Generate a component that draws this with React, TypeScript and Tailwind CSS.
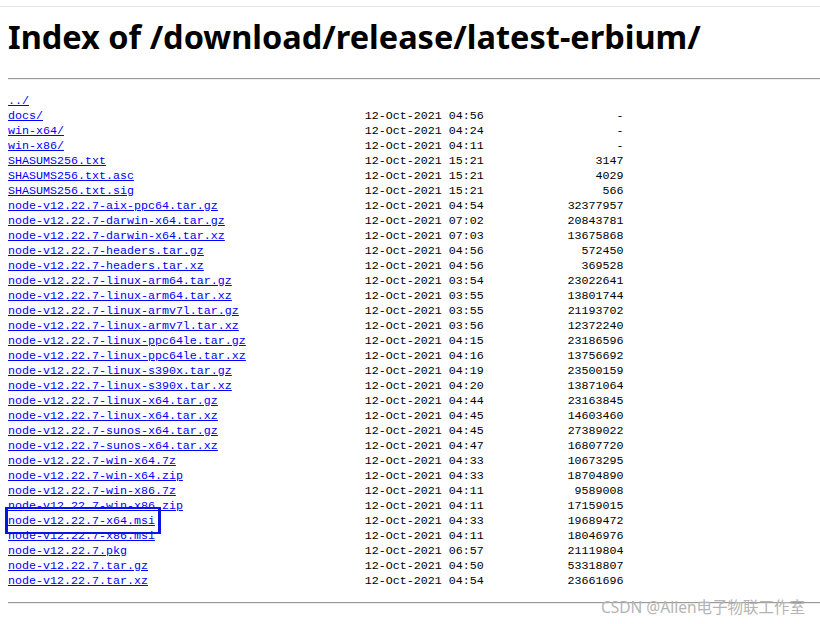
const ROWS: [string, string, string][] = [
  ['../', '', ''],
  ['docs/', '12-Oct-2021 04:56', '-'],
  ['win-x64/', '12-Oct-2021 04:24', '-'],
  ['win-x86/', '12-Oct-2021 04:11', '-'],
  ['SHASUMS256.txt', '12-Oct-2021 15:21', '3147'],
  ['SHASUMS256.txt.asc', '12-Oct-2021 15:21', '4029'],
  ['SHASUMS256.txt.sig', '12-Oct-2021 15:21', '566'],
  ['node-v12.22.7-aix-ppc64.tar.gz', '12-Oct-2021 04:54', '32377957'],
  ['node-v12.22.7-darwin-x64.tar.gz', '12-Oct-2021 07:02', '20843781'],
  ['node-v12.22.7-darwin-x64.tar.xz', '12-Oct-2021 07:03', '13675868'],
  ['node-v12.22.7-headers.tar.gz', '12-Oct-2021 04:56', '572450'],
  ['node-v12.22.7-headers.tar.xz', '12-Oct-2021 04:56', '369528'],
  ['node-v12.22.7-linux-arm64.tar.gz', '12-Oct-2021 03:54', '23022641'],
  ['node-v12.22.7-linux-arm64.tar.xz', '12-Oct-2021 03:55', '13801744'],
  ['node-v12.22.7-linux-armv7l.tar.gz', '12-Oct-2021 03:55', '21193702'],
  ['node-v12.22.7-linux-armv7l.tar.xz', '12-Oct-2021 03:56', '12372240'],
  ['node-v12.22.7-linux-ppc64le.tar.gz', '12-Oct-2021 04:15', '23186596'],
  ['node-v12.22.7-linux-ppc64le.tar.xz', '12-Oct-2021 04:16', '13756692'],
  ['node-v12.22.7-linux-s390x.tar.gz', '12-Oct-2021 04:19', '23500159'],
  ['node-v12.22.7-linux-s390x.tar.xz', '12-Oct-2021 04:20', '13871064'],
  ['node-v12.22.7-linux-x64.tar.gz', '12-Oct-2021 04:44', '23163845'],
  ['node-v12.22.7-linux-x64.tar.xz', '12-Oct-2021 04:45', '14603460'],
  ['node-v12.22.7-sunos-x64.tar.gz', '12-Oct-2021 04:45', '27389022'],
  ['node-v12.22.7-sunos-x64.tar.xz', '12-Oct-2021 04:47', '16807720'],
  ['node-v12.22.7-win-x64.7z', '12-Oct-2021 04:33', '10673295'],
  ['node-v12.22.7-win-x64.zip', '12-Oct-2021 04:33', '18704890'],
  ['node-v12.22.7-win-x86.7z', '12-Oct-2021 04:11', '9589008'],
  ['node-v12.22.7-win-x86.zip', '12-Oct-2021 04:11', '17159015'],
  ['node-v12.22.7-x64.msi', '12-Oct-2021 04:33', '19689472'],
  ['node-v12.22.7-x86.msi', '12-Oct-2021 04:11', '18046976'],
  ['node-v12.22.7.pkg', '12-Oct-2021 06:57', '21119804'],
  ['node-v12.22.7.tar.gz', '12-Oct-2021 04:50', '53318807'],
  ['node-v12.22.7.tar.xz', '12-Oct-2021 04:54', '23661696'],
];

// the installer the screenshot highlights
const HIGHLIGHT = 'node-v12.22.7-x64.msi';

function Row({ name, date, size }: { name: string; date: string; size: string }) {
  const pad = date ? ' '.repeat(Math.max(1, 51 - name.length)) : '';
  const sizeCol = date ? size.padStart(20, ' ') : '';
  const link = (
    <a href="#" className="text-[#0000ff] underline">
      {name}
    </a>
  );

  return (
    <div className="h-[15px]">
      {name === HIGHLIGHT ? (
        <span className="relative">
          {link}
          <span className="absolute left-[-3px] right-[-6px] top-[-7px] bottom-[-6px] border-[#0a14e0] border-x-[3px] border-y-2 pointer-events-none" />
        </span>
      ) : (
        link
      )}
      {pad}
      {date}
      {sizeCol}
    </div>
  );
}

export default function App() {
  return (
    <div className="relative w-[820px] h-[624px] bg-white overflow-hidden text-black">
      <div className="mt-[6px] h-px bg-[#e3e3e3]" />

      <h1 className="ml-2 mt-[10px] text-[32.5px] leading-[40px] font-bold font-['Noto_Sans',sans-serif]">
        Index of /download/release/latest-erbium/
      </h1>

      <div className="ml-2 mt-[21px] border-t border-t-[#9a9a9a] border-b border-b-[#ececec]" />

      <pre className="ml-2 mt-[14px] text-[11.67px] leading-[15px] font-['Liberation_Mono',monospace] whitespace-pre">
        {ROWS.map(([name, date, size]) => (
          <Row key={name} name={name} date={date} size={size} />
        ))}
      </pre>

      <div className="ml-2 mt-[13px] border-t border-t-[#9a9a9a] border-b border-b-[#ececec]" />

      {/* watermark */}
      <div className="absolute right-[15px] top-[597px] text-[15.5px] leading-[20px] text-[#b4b4b4] font-['Noto_Sans','Noto_Sans_CJK_SC',sans-serif]">
        CSDN @Allen电子物联工作室
      </div>
    </div>
  );
}
